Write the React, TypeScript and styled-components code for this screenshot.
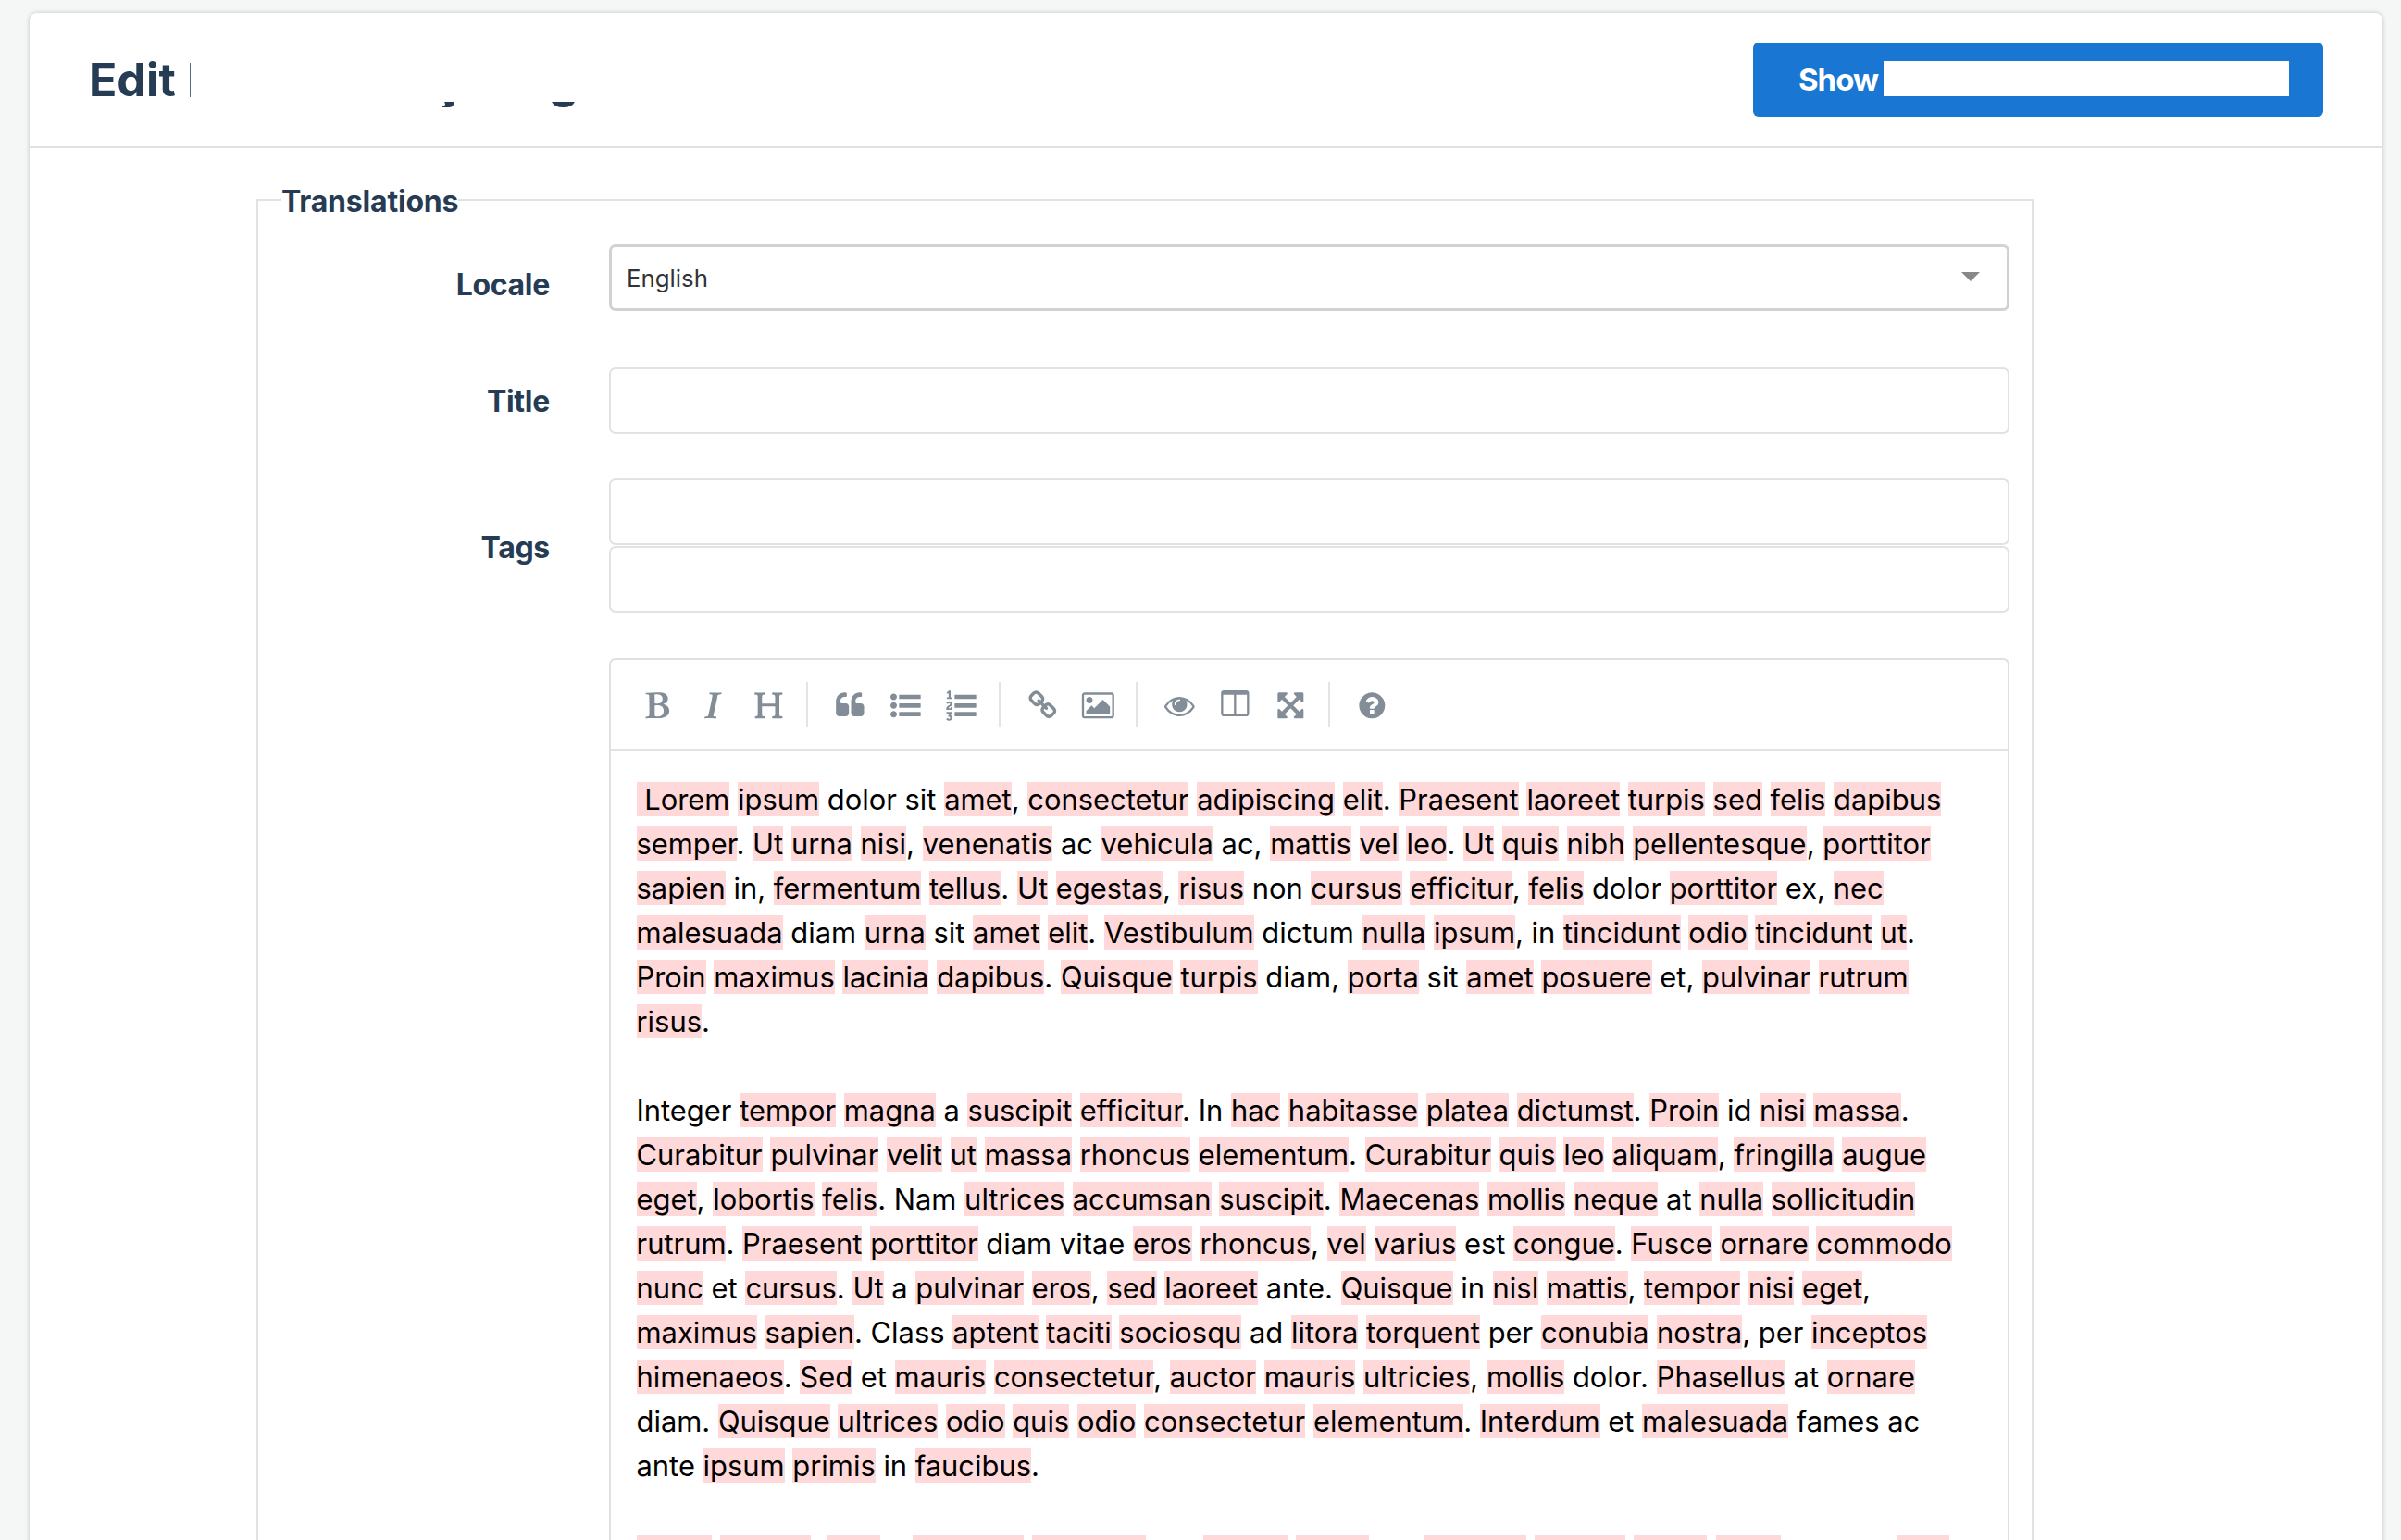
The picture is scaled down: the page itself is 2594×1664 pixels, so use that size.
import React from 'react';
import styled, { createGlobalStyle } from 'styled-components';

const Global = createGlobalStyle`
  html, body { margin: 0; height: 100%; overflow: hidden; background: #f5f7f7; }
  body { font-family: Inter, "Liberation Sans", sans-serif; }
  #root { height: 100vh; overflow: hidden; }
  * { box-sizing: border-box; }
`;

const Page = styled.div`
  padding: 14px 20px 0 32px;
`;
const Card = styled.main`
  background: #fff;
  border-radius: 8px 8px 0 0;
  box-shadow: 0 0 5px rgba(0, 0, 0, 0.22);
`;
const Header = styled.header`
  position: relative;
  height: 146px;
  border-bottom: 2px solid #e2e2e2;
  display: flex;
  align-items: center;
  justify-content: space-between;
  padding: 0 64px 0 64px;
`;
const TitleRow = styled.div`
  display: flex;
  align-items: center;
`;
const Title = styled.h1`
  margin: 0;
  font-size: 50px;
  line-height: 60px;
  font-weight: 700;
  color: #253c54;
`;
const Caret = styled.span`
  width: 1px;
  height: 37px;
  margin-left: 15px;
  background: #5a6b7d;
`;
const Tail = styled.svg`
  position: absolute;
  top: 96px;
  left: ${(p: { $left: number }) => p.$left}px;
  height: 6px;
  fill: #253c54;
`;
const ShowButton = styled.button`
  position: relative;
  width: 616px;
  height: 80px;
  padding: 0 0 0 49px;
  border: 0;
  border-radius: 6px;
  background: #1976d2;
  color: #fff;
  font-family: Inter, sans-serif;
  font-size: 33px;
  font-weight: 700;
  letter-spacing: -1px;
  display: flex;
  align-items: center;
  gap: 6px;
`;
const Cover = styled.span`
  position: relative;
  top: -1px;
  width: 438px;
  height: 38px;
  background: #fff;
`;
const Body = styled.div`
  padding: 35.5px 0 0 245px;
`;
const Fieldset = styled.fieldset`
  width: 1920px;
  margin: 0;
  padding: 27.5px 24px 0 0;
  border: 2px solid #e2e2e2;
  border-bottom: 0;
`;
const Legend = styled.legend`
  margin-left: 25px;
  padding: 3px 0 0;
  font-size: 32px;
  line-height: 38px;
  font-weight: 700;
  letter-spacing: -0.2px;
  color: #253c54;
`;
const Row = styled.div<{ $gap: number }>`
  display: grid;
  grid-template-columns: 315px 1fr;
  column-gap: 64px;
  margin-bottom: ${(p) => p.$gap}px;
`;
const Label = styled.label<{ $offset: number }>`
  padding-top: ${(p) => p.$offset}px;
  text-align: right;
  font-size: 32px;
  line-height: 38px;
  font-weight: 700;
  letter-spacing: -0.3px;
  color: #253c54;
`;
const Select = styled.div`
  height: 72px;
  padding: 0 29px 0 16px;
  display: flex;
  align-items: center;
  justify-content: space-between;
  border: 3px solid #d2d2d2;
  border-radius: 7px;
  font-size: 25.8px;
  color: #333;
`;
const Arrow = styled.span`
  width: 0;
  height: 0;
  margin-bottom: 2px;
  border-left: 10px solid transparent;
  border-right: 10px solid transparent;
  border-top: 10px solid #888;
`;
const Input = styled.div`
  height: 72px;
  border: 2px solid #e2e2e2;
  border-radius: 7px;
`;
const Stack = styled.div`
  display: grid;
  row-gap: 1px;
`;
const Editor = styled.section`
  border: 2px solid #e0e0e0;
  border-bottom: 0;
  border-radius: 7px 7px 0 0;
`;
const Toolbar = styled.div`
  height: 98px;
  padding: 3px 0 0 20px;
  display: flex;
  align-items: center;
  border-bottom: 2px solid #e2e2e2;
`;
const ToolButton = styled.span`
  width: 60px;
  height: 33px;
  display: flex;
  align-items: center;
  justify-content: center;
`;
const Glyph = styled.svg`
  width: 32.67px;
  height: 32.67px;
  overflow: visible;
  fill: #828d97;
`;
const Separator = styled.span`
  width: 2px;
  height: 48px;
  margin: -3px 15px 0 11px;
  background: #e4e4e4;
`;
const Content = styled.div`
  padding: 28.5px 0 0 27.5px;
  font-family: Inter, "Liberation Sans", sans-serif;
  font-size: 30.9px;
  color: #000;
`;
const Line = styled.div`
  height: 48px;
  line-height: 48px;
  white-space: pre;
`;
const Mark = styled.span`
  background: #ffd8d9;
`;
const StubRow = styled.div`
  height: 48px;
  padding-top: 3.5px;
  display: flex;
`;
const Stub = styled.span<{ $w: number; $ml: number }>`
  width: ${(p) => p.$w}px;
  height: 38px;
  margin-left: ${(p) => p.$ml}px;
  background: #ffd8d9;
`;

const P = {
  bold: 'M747 1521q74 32 140 32 376 0 376-335 0-114-41-180-27-44-61.5-74t-67.5-46.5-80.5-25-84-10.5-94.5-2q-73 0-101 10 0 53-.5 159t-.5 158q0 8-1 67.5t-.5 96.5 4.5 83.5 12 66.5zm-14-746q42 7 109 7 82 0 143-13t110-44.5 74.5-89.5 25.5-142q0-70-29-122.5t-79-82-108-43.5-124-14q-50 0-130 13 0 50 4 151t4 152q0 27-.5 80t-.5 79q0 46 1 69zm-541 889l2-94q15-4 85-16t106-27q7-12 12.5-27t8.5-33.5 5.5-32.5 3-37.5.5-34v-65.5q0-982-22-1025-4-8-22-14.5t-44.5-11-49.5-7-48.5-4.5-30.5-3l-4-83q98-2 340-11.5t373-9.5q23 0 68 .5t68 .5q70 0 136.5 13t128.5 42 108 71 74 104.5 28 137.5q0 52-16.5 95.5t-39 72-64.5 57.5-73 45-84 40q154 35 256.5 134t102.5 248q0 100-35 179.5t-93.5 130.5-138 85.5-163.5 48.5-176 14q-44 0-132-3t-132-3q-106 0-307 11t-231 12z',
  italic: 'M384 1662l17-85q6-2 81.5-21.5t111.5-37.5q28-35 41-101 1-7 62-289t114-543.5 52-296.5v-25q-24-13-54.5-18.5t-69.5-8-58-5.5l19-103q33 2 120 6.5t149.5 7 120.5 2.5q48 0 98.5-2.5t121-7 98.5-6.5q-5 39-19 89-30 10-101.5 28.5t-108.5 33.5q-8 19-14 42.5t-9 40-7.5 45.5-6.5 42q-27 148-87.5 419.5t-77.5 355.5q-2 9-13 58t-20 90-16 83.5-6 57.5l1 18q17 4 185 31-3 44-16 99-11 0-32.5 1.5t-32.5 1.5q-29 0-87-10t-86-10q-138-2-206-2-51 0-143 9t-121 11z',
  header: 'M1682 1664q-44 0-132.5-3.5t-133.5-3.5q-44 0-132 3.5t-132 3.5q-24 0-37-20.5t-13-45.5q0-31 17-46t39-17 51-7 45-15q33-21 33-140l-1-391q0-21-1-31-13-4-50-4h-675q-38 0-51 4-1 10-1 31l-1 371q0 142 37 164 16 10 48 13t57 3.5 45 15 20 45.5q0 26-12.5 48t-36.5 22q-47 0-139.5-3.5t-138.5-3.5q-43 0-128 3.5t-127 3.5q-23 0-35.5-21t-12.5-45q0-30 15.5-45t36-17.5 47.5-7.5 42-15q33-23 33-143l-1-57v-813q0-3 .5-26t0-36.5-1.5-38.5-3.5-42-6.5-36.5-11-31.5-16-18q-15-10-45-12t-53-2-41-14-18-45q0-26 12-48t36-22q46 0 138.5 3.5t138.5 3.5q42 0 126.5-3.5t126.5-3.5q25 0 37.5 22t12.5 48q0 30-17 43.5t-38.5 14.5-49.5 4-43 13q-35 21-35 160l1 320q0 21 1 32 13 3 39 3h699q25 0 38-3 1-11 1-32l1-320q0-139-35-160-18-11-58.5-12.5t-66-13-25.5-49.5q0-26 12.5-48t37.5-22q44 0 132 3.5t132 3.5q43 0 129-3.5t129-3.5q25 0 37.5 22t12.5 48q0 30-17.5 44t-40 14.5-51.5 3-44 12.5q-35 23-35 161l1 943q0 119 34 140 16 10 46 13.5t53.5 4.5 41.5 15.5 18 44.5q0 26-12 48t-36 22z',
  quote: 'M768 960v384q0 80-56 136t-136 56h-384q-80 0-136-56t-56-136v-704q0-104 40.5-198.5t109.5-163.5 163.5-109.5 198.5-40.5h64q26 0 45 19t19 45v128q0 26-19 45t-45 19h-64q-106 0-181 75t-75 181v32q0 40 28 68t68 28h224q80 0 136 56t56 136zm896 0v384q0 80-56 136t-136 56h-384q-80 0-136-56t-56-136v-704q0-104 40.5-198.5t109.5-163.5 163.5-109.5 198.5-40.5h64q26 0 45 19t19 45v128q0 26-19 45t-45 19h-64q-106 0-181 75t-75 181v32q0 40 28 68t68 28h224q80 0 136 56t56 136z',
  ul: 'M384 1408q0 80-56 136t-136 56-136-56-56-136 56-136 136-56 136 56 56 136zm0-512q0 80-56 136t-136 56-136-56-56-136 56-136 136-56 136 56 56 136zm1408 416v192q0 13-9.5 22.5t-22.5 9.5h-1216q-13 0-22.5-9.5t-9.5-22.5v-192q0-13 9.5-22.5t22.5-9.5h1216q13 0 22.5 9.5t9.5 22.5zm-1408-928q0 80-56 136t-136 56-136-56-56-136 56-136 136-56 136 56 56 136zm1408 416v192q0 13-9.5 22.5t-22.5 9.5h-1216q-13 0-22.5-9.5t-9.5-22.5v-192q0-13 9.5-22.5t22.5-9.5h1216q13 0 22.5 9.5t9.5 22.5zm0-512v192q0 13-9.5 22.5t-22.5 9.5h-1216q-13 0-22.5-9.5t-9.5-22.5v-192q0-13 9.5-22.5t22.5-9.5h1216q13 0 22.5 9.5t9.5 22.5z',
  ol: 'M381 1620q0 80-54.5 126t-135.5 46q-106 0-172-66l57-88q49 45 106 45 29 0 50.5-14.5t21.5-42.5q0-64-105-56l-26-56q8-10 32.5-43.5t42.5-54 37-38.5v-1q-16 0-48.5 1t-48.5 1v53h-106v-152h333v88l-95 115q51 12 81 49t30 88zm2-627v159h-362q-6-36-6-54 0-51 23.5-93t56.5-68 66-47.5 56.5-43.5 23.5-45q0-25-14.5-38.5t-39.5-13.5q-46 0-81 58l-85-59q24-51 71.5-79.5t105.5-28.5q73 0 123 41.5t50 112.5q0 50-34 91.5t-75 64.5-75.5 50.5-35.5 52.5h127v-60h105zm1409 319v192q0 13-9.5 22.5t-22.5 9.5h-1216q-13 0-22.5-9.5t-9.5-22.5v-192q0-14 9-23t23-9h1216q13 0 22.5 9.5t9.5 22.5zm-1408-899v99h-335v-99h107q0-41 .5-122t.5-121v-12h-2q-8 17-50 54l-71-76 136-127h106v404h108zm1408 387v192q0 13-9.5 22.5t-22.5 9.5h-1216q-13 0-22.5-9.5t-9.5-22.5v-192q0-14 9-23t23-9h1216q13 0 22.5 9.5t9.5 22.5zm0-512v192q0 13-9.5 22.5t-22.5 9.5h-1216q-13 0-22.5-9.5t-9.5-22.5v-192q0-13 9.5-22.5t22.5-9.5h1216q13 0 22.5 9.5t9.5 22.5z',
  link: 'M1520 1216q0-40-28-68l-208-208q-28-28-68-28-42 0-72 32 3 3 19 18.5t21.5 21.5 15 19 13 25.5 3.5 27.5q0 40-28 68t-68 28q-15 0-27.5-3.5t-25.5-13-19-15-21.5-21.5-18.5-19q-33 31-33 73 0 40 28 68l206 207q27 27 68 27 40 0 68-26l147-146q28-28 28-67zm-703-705q0-40-28-68l-206-207q-28-28-68-28-39 0-68 27l-147 146q-28 28-28 67 0 40 28 68l208 208q27 27 68 27 42 0 72-31-3-3-19-18.5t-21.5-21.5-15-19-13-25.5-3.5-27.5q0-40 28-68t68-28q15 0 27.5 3.5t25.5 13 19 15 21.5 21.5 18.5 19q33-31 33-73zm895 705q0 120-85 203l-147 146q-83 83-203 83-121 0-204-85l-206-207q-83-83-83-203 0-123 88-209l-88-88q-86 88-208 88-120 0-204-84l-208-208q-84-84-84-204t85-203l147-146q83-83 203-83 121 0 204 85l206 207q83 83 83 203 0 123-88 209l88 88q86-88 208-88 120 0 204 84l208 208q84 84 84 204z',
  image: 'M576 576q0 80-56 136t-136 56-136-56-56-136 56-136 136-56 136 56 56 136zm1024 384v448h-1408v-192l320-320 160 160 512-512zm96-704h-1600q-13 0-22.5 9.5t-9.5 22.5v1216q0 13 9.5 22.5t22.5 9.5h1600q13 0 22.5-9.5t9.5-22.5v-1216q0-13-9.5-22.5t-22.5-9.5zm160 32v1216q0 66-47 113t-113 47h-1600q-66 0-113-47t-47-113v-1216q0-66 47-113t113-47h1600q66 0 113 47t47 113z',
  eye: 'M1664 960q-152-236-381-353 61 104 61 225 0 185-131.5 316.5t-316.5 131.5-316.5-131.5-131.5-316.5q0-121 61-225-229 117-381 353 133 205 333.5 326.5t434.5 121.5 434.5-121.5 333.5-326.5zm-720-384q0-20-14-34t-34-14q-125 0-214.5 89.5t-89.5 214.5q0 20 14 34t34 14 34-14 14-34q0-86 61-147t147-61q20 0 34-14t14-34zm848 384q0 34-20 69-140 230-376.5 368.5t-499.5 138.5-499.5-139-376.5-368q-20-35-20-69t20-69q140-229 376.5-368t499.5-139 499.5 139 376.5 368q20 35 20 69z',
  columns: 'M160 1408h608v-1152h-640v1120q0 13 9.5 22.5t22.5 9.5zm1376-32v-1120h-640v1152h608q13 0 22.5-9.5t9.5-22.5zm128-1216v1216q0 66-47 113t-113 47h-1344q-66 0-113-47t-47-113v-1216q0-66 47-113t113-47h1344q66 0 113 47t47 113z',
  full: 'M1411 541l-355 355 355 355 144-144q29-31 70-14 39 17 39 59v448q0 26-19 45t-45 19h-448q-42 0-59-40-17-39 14-69l144-144-355-355-355 355 144 144q31 30 14 69-17 40-59 40h-448q-26 0-45-19t-19-45v-448q0-42 40-59 39-17 69 14l144 144 355-355-355-355-144 144q-19 19-45 19-12 0-24-5-40-17-40-59v-448q0-26 19-45t45-19h448q42 0 59 40 17 39-14 69l-144 144 355 355 355-355-144-144q-31-30-14-69 17-40 59-40h448q26 0 45 19t19 45v448q0 42-39 59-13 5-25 5-26 0-45-19z',
  help: 'M1024 1376v-192q0-14-9-23t-23-9h-192q-14 0-23 9t-9 23v192q0 14 9 23t23 9h192q14 0 23-9t9-23zm256-672q0-88-55.5-163t-138.5-116-170-41q-243 0-371 213-15 24 8 42l132 100q7 6 19 6 16 0 25-12 53-68 86-92 34-24 86-24 48 0 85.5 26t37.5 59q0 38-20 61t-68 45q-63 28-115.5 86.5t-52.5 125.5v36q0 14 9 23t23 9h192q14 0 23-9t9-23q0-19 21.5-49.5t54.5-49.5q32-18 49-28.5t46-35 44.5-48 28-60.5 12.5-81zm384 192q0 209-103 385.5t-279.5 279.5-385.5 103-385.5-103-279.5-279.5-103-385.5 103-385.5 279.5-279.5 385.5-103 385.5 103 279.5 279.5 103 385.5z',
};

const groups: { d: string; box?: string }[][] = [
  [{ d: P.bold }, { d: P.italic }, { d: P.header }],
  [{ d: P.quote, box: '-64 0 1792 1792' }, { d: P.ul }, { d: P.ol }],
  [{ d: P.link }, { d: P.image }],
  [{ d: P.eye }, { d: P.columns, box: '-64 0 1792 1792' }, { d: P.full }],
  [{ d: P.help }],
];

const lines = [
  '[\u00a0Lorem] [ipsum] dolor sit [amet], [consectetur] [adipiscing] [elit]. [Praesent] [laoreet] [turpis] [sed] [felis] [dapibus]',
  '[semper]. [Ut] [urna] [nisi], [venenatis] ac [vehicula] ac, [mattis] [vel] [leo]. [Ut] [quis] [nibh] [pellentesque], [porttitor]',
  '[sapien] in, [fermentum] [tellus]. [Ut] [egestas], [risus] non [cursus] [efficitur], [felis] dolor [porttitor] ex, [nec]',
  '[malesuada] diam [urna] sit [amet] [elit]. [Vestibulum] dictum [nulla] [ipsum], in [tincidunt] [odio] [tincidunt] [ut].',
  '[Proin] [maximus] [lacinia] [dapibus]. [Quisque] [turpis] diam, [porta] sit [amet] [posuere] et, [pulvinar] [rutrum]',
  '[risus].',
  '',
  'Integer [tempor] [magna] a [suscipit] [efficitur]. In [hac] [habitasse] [platea] [dictumst]. [Proin] id [nisi] [massa].',
  '[Curabitur] [pulvinar] [velit] [ut] [massa] [rhoncus] [elementum]. [Curabitur] [quis] [leo] [aliquam], [fringilla] [augue]',
  '[eget], [lobortis] [felis]. Nam [ultrices] [accumsan] [suscipit]. [Maecenas] [mollis] [neque] at [nulla] [sollicitudin]',
  '[rutrum]. [Praesent] [porttitor] diam vitae [eros] [rhoncus], [vel] [varius] est [congue]. [Fusce] [ornare] [commodo]',
  '[nunc] et [cursus]. [Ut] a [pulvinar] [eros], [sed] [laoreet] ante. [Quisque] in [nisl] [mattis], [tempor] [nisi] [eget],',
  '[maximus] [sapien]. Class [aptent] [taciti] [sociosqu] ad [litora] [torquent] per [conubia] [nostra], per [inceptos]',
  '[himenaeos]. [Sed] et [mauris] [consectetur], [auctor] [mauris] [ultricies], [mollis] dolor. [Phasellus] at [ornare]',
  'diam. [Quisque] [ultrices] [odio] [quis] [odio] [consectetur] [elementum]. [Interdum] et [malesuada] fames ac',
  'ante [ipsum] [primis] in [faucibus].',
  '',
];

const stubs: [number, number][] = [
  [81, 0], [98, 9], [57, 18], [120, 35], [123, 9], [91, 62], [79, 9], [110, 60], [98, 9], [79, 9], [70, 10], [56, 126],
];

const renderLine = (text: string) =>
  text.split(/(\[[^\]]*\])/).map((part, i) =>
    part.startsWith('[') ? <Mark key={i}>{part.slice(1, -1)}</Mark> : part
  );

export default function App() {
  return (
    <>
      <Global />
      <Page>
        <Card>
          <Header>
            <TitleRow>
              <Title>Edit</Title>
              <Caret />
            </TitleRow>
            <Tail $left={445} viewBox="0 0 14 6">
              <path d="M3 0h11l-1 3q-1 3-5 3H0V4h3q1 0 1-2z" />
            </Tail>
            <Tail $left={564} viewBox="0 0 25 6">
              <path d="M0 0h25q-3 6-12.500 6T0 0z" />
            </Tail>
            <ShowButton type="button">
              Show
              <Cover />
            </ShowButton>
          </Header>
          <Body>
            <Fieldset>
              <Legend>Translations</Legend>
              <Row $gap={61}>
                <Label $offset={25}>Locale</Label>
                <Select>
                  English
                  <Arrow />
                </Select>
              </Row>
              <Row $gap={48}>
                <Label $offset={18}>Title</Label>
                <Input />
              </Row>
              <Row $gap={49}>
                <Label $offset={56}>Tags</Label>
                <Stack>
                  <Input />
                  <Input />
                </Stack>
              </Row>
              <Row $gap={0}>
                <span />
                <Editor>
                  <Toolbar>
                    {groups.map((group, g) => (
                      <React.Fragment key={g}>
                        {g > 0 && <Separator />}
                        {group.map((icon, i) => (
                          <ToolButton key={i}>
                            <Glyph viewBox={icon.box ?? '0 0 1792 1792'}>
                              <path d={icon.d} />
                            </Glyph>
                          </ToolButton>
                        ))}
                      </React.Fragment>
                    ))}
                  </Toolbar>
                  <Content>
                    {lines.map((l, i) => (
                      <Line key={i}>{renderLine(l)}</Line>
                    ))}
                    <StubRow>
                      {stubs.map(([w, ml], i) => (
                        <Stub key={i} $w={w} $ml={ml} />
                      ))}
                    </StubRow>
                  </Content>
                </Editor>
              </Row>
            </Fieldset>
          </Body>
        </Card>
      </Page>
    </>
  );
}
